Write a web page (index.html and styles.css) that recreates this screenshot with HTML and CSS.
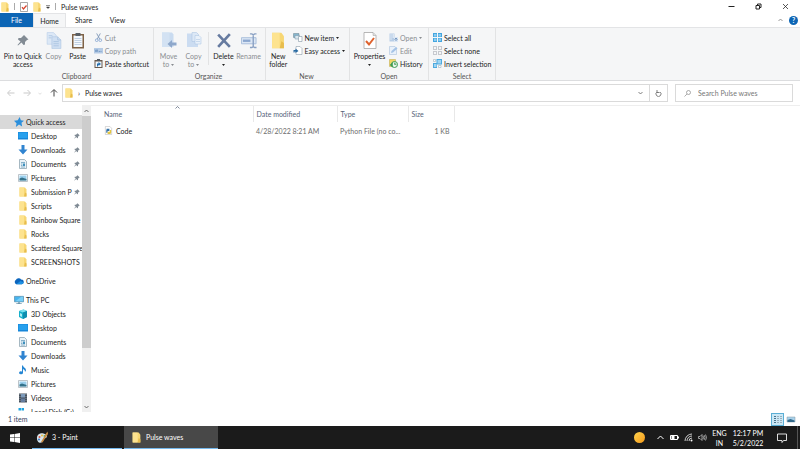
FILE: index.html
```html
<!DOCTYPE html>
<html lang="en">
<head>
    <meta charset="UTF-8">
    <meta name="viewport" content="width=device-width, initial-scale=1.0">
    <title>Pulse waves</title>
    <link rel="stylesheet" href="styles.css">
</head>
<body>
    <!-- icon shapes -->
    <svg class="sprite" width="0" height="0" aria-hidden="true">
        <symbol id="folder" viewBox="0 0 16 20">
            <path d="M1 1h11l3 4v14H1z" fill="#f7d774"/>
            <path d="M1 1h9v18H1z" fill="#fde38f"/>
            <path d="M12 11l3 2v6h-5z" fill="#e8bd4d"/>
        </symbol>
        <symbol id="pin" viewBox="0 0 24 24">
            <path d="M14 1l9 9-3 1-4 4v5l-3 1-4-5-7 6-1-1 6-7-5-4 1-3h5l4-4z" fill="currentColor"/>
        </symbol>
        <symbol id="star" viewBox="0 0 16 16">
            <path d="M9 0l2 5 5 1-4 3 1 6-5-3-5 4 1-6-4-4 6-1z" fill="#2b8fdc"/>
        </symbol>
        <symbol id="copy" viewBox="0 0 28 32">
            <path d="M1 1h12l5 5v17H1z" fill="#dce8f6" stroke="#b4cbe6"/>
            <path d="M10 9h11l6 6v16H10z" fill="#cfdff2" stroke="#a7c1e0"/>
            <path d="M21 9v6h6M4 7h7M4 11h5M13 18h10M13 22h10M13 26h10" fill="none" stroke="#a7c1e0" stroke-width="1.5"/>
        </symbol>
        <symbol id="paste" viewBox="0 0 26 34">
            <path d="M1 4h24v29H1z" fill="#7e6247"/>
            <path d="M4 7h18v23H4z" fill="#f5f9fd"/>
            <path d="M8 2h10v6H8z" fill="#596067"/>
            <path d="M6 13h14M6 17h14M6 21h14M6 25h14" stroke="#adc2d9" stroke-width="1.5"/>
        </symbol>
        <symbol id="cut" viewBox="0 0 16 20">
            <path d="M4 1l7 13M12 1L5 14" stroke="#7f97b8" stroke-width="2"/>
            <circle cx="4" cy="16" r="3" fill="none" stroke="#8eadd5" stroke-width="2"/>
            <circle cx="12" cy="16" r="3" fill="none" stroke="#8eadd5" stroke-width="2"/>
        </symbol>
        <symbol id="path" viewBox="0 0 18 16">
            <path d="M0 3h18v11H0z" fill="#b5cbe5"/>
            <path d="M2 6l2 5 2-5 2 5M10 10h2M13 10h2" fill="none" stroke="#6a90bd" stroke-width="1.5"/>
        </symbol>
        <symbol id="shortcut" viewBox="0 0 16 18">
            <path d="M0 2h16v16H0z" fill="#68594d"/>
            <path d="M2 5h12v11H2z" fill="#f1f7fd"/>
            <path d="M5 0h6v4H5z" fill="#525960"/>
            <path d="M5 15V9h3V6l5 4-5 4v-2H7v3z" fill="#256fae"/>
        </symbol>
        <symbol id="moveto" viewBox="0 0 30 34">
            <path d="M1 1h20l3 4v25H1z" fill="#c9dbf0"/>
            <path d="M1 1h15v29H1z" fill="#d3e2f3"/>
            <path d="M12 24l9-8v5h9v6h-9v5z" fill="#8ea8cb"/>
        </symbol>
        <symbol id="copyto" viewBox="0 0 30 34">
            <path d="M1 3h22v27H1z" fill="#cbdcf1"/>
            <path d="M11 1h9l4 4v14H11z" fill="#dce8f6" stroke="#a7c1e0"/>
            <path d="M17 7h8l4 4v13H17z" fill="#e9f1fa" stroke="#a7c1e0"/>
            <path d="M19 15h8M19 19h8" stroke="#a7c1e0"/>
        </symbol>
        <symbol id="delete" viewBox="0 0 28 32">
            <path d="M3 5l22 23M25 4L3 28" stroke="#667ba0" stroke-width="5"/>
        </symbol>
        <symbol id="rename" viewBox="0 0 34 32">
            <path d="M1 10h31v13H1z" fill="#dce7f5" stroke="#a9bedb" stroke-width="2"/>
            <path d="M4 14h16v5H4z" fill="#8ba7cf"/>
            <path d="M19 2h4l3 2 3-2h4M26 4v25M19 31h4l3-2 3 2h4" fill="none" stroke="#8ba2c4" stroke-width="3"/>
        </symbol>
        <symbol id="newitem" viewBox="0 0 20 18">
            <path d="M1 1h11v8H1z" fill="#86b6cd" stroke="#69818f"/>
            <path d="M4 5h9v7H4z" fill="#d9e7ef" stroke="#7492a6"/>
            <path d="M11 7h7v10h-7z" fill="#fff" stroke="#6f8595"/>
        </symbol>
        <symbol id="access" viewBox="0 0 20 18">
            <path d="M6 1h8l4 4v12H6z" fill="#fff" stroke="#788a9a"/>
            <path d="M1 13V8h4V5l6 5-6 4v-3H3v2z" fill="#286aa2"/>
        </symbol>
        <symbol id="props" viewBox="0 0 26 34">
            <path d="M1 1h18l6 6v26H1z" fill="#fff" stroke="#a0a0a0" stroke-width="1.5"/>
            <path d="M19 1v6h6" fill="#ddd" stroke="#a0a0a0"/>
            <path d="M5 18l6 7L21 12" fill="none" stroke="#df622d" stroke-width="4"/>
        </symbol>
        <symbol id="open" viewBox="0 0 18 18">
            <path d="M1 1h10v16H1z" fill="#b8cee7"/>
            <path d="M3 4h2M3 8h2M3 12h2M7 4h3M7 8h3" stroke="#fff" stroke-width="2"/>
            <path d="M10 8h8v10h-8z" fill="#dce7f4"/>
            <path d="M14 16v-6M11 13l3-3 3 3" fill="none" stroke="#7899c1" stroke-width="2"/>
        </symbol>
        <symbol id="edit" viewBox="0 0 18 18">
            <path d="M1 1h11l3 3v13H1z" fill="#e9f1fa" stroke="#9eb9d9"/>
            <path d="M4 14l1-4 9-8 3 3-9 8z" fill="#a5c3e6"/>
        </symbol>
        <symbol id="history" viewBox="0 0 18 18">
            <path d="M1 1h12v14H1z" fill="#f0d567" stroke="#bda741"/>
            <circle cx="11" cy="11" r="6" fill="#e9f5ec" stroke="#3e9b54" stroke-width="2"/>
            <path d="M11 7v4h4M2 12l5-5v9z" fill="#3e9b54" stroke="#3e9b54"/>
        </symbol>
        <symbol id="selall" viewBox="0 0 18 18">
            <path d="M0 0h8v8H0zM10 0h8v8h-8zM0 10h8v8H0zM10 10h8v8h-8z" fill="#43a5df"/>
            <path d="M2 2h5v5H2zM11 2h5v5h-5zM2 11h5v5H2zM11 11h5v5h-5z" fill="#8dcdf1"/>
        </symbol>
        <symbol id="selnone" viewBox="0 0 18 18">
            <path d="M1 1h6v6H1zM11 1h6v6h-6zM1 11h6v6H1zM11 11h6v6h-6z" fill="none" stroke="#989da4" stroke-width="2" stroke-dasharray="2 2"/>
        </symbol>
        <symbol id="selinv" viewBox="0 0 18 18">
            <path d="M7 0h11v11H7zM0 8h8v10H0z" fill="#4da9de"/>
            <path d="M9 2h7v7H9zM2 10h5v6H2z" fill="#a0d5f3"/>
            <path d="M1 1h4v4H1zM11 13h5v4h-5z" fill="#fff" stroke="#8da3b3"/>
        </symbol>
        <symbol id="check" viewBox="0 0 16 20">
            <path d="M1 1h14v18H1z" fill="#fff" stroke="#8c8c8c" stroke-width="1.5"/>
            <path d="M4 10l3 4 6-7" fill="none" stroke="#d8442d" stroke-width="2.5"/>
        </symbol>
        <symbol id="desktop" viewBox="0 0 20 16">
            <path d="M0 0h20v15H0z" fill="#1686d9"/>
            <path d="M1 1h18v11H1z" fill="#27a0ed"/>
        </symbol>
        <symbol id="down" viewBox="0 0 20 20">
            <path d="M7 0h6v9h6l-9 10L1 9h6z" fill="#3084d0"/>
        </symbol>
        <symbol id="docs" viewBox="0 0 20 20">
            <path d="M3 1h10l4 4v14H3z" fill="#eaf3f8" stroke="#8ca2af" stroke-width="1.5"/>
            <path d="M6 7h8M6 10h3M6 13h3M6 16h8" stroke="#649bbb" stroke-width="1.5"/>
            <path d="M10 9h4v5h-4z" fill="#3e90bd"/>
        </symbol>
        <symbol id="pics" viewBox="0 0 20 16">
            <path d="M1 1h18v14H1z" fill="#fff" stroke="#a5b0b8" stroke-width="1.5"/>
            <path d="M3 3h14v10H3z" fill="#9bd0ee"/>
            <path d="M3 9l5-2 9 3v3H3z" fill="#34728a"/>
        </symbol>
        <symbol id="cloud" viewBox="0 0 22 16">
            <path d="M5 15a5 5 0 0 1-1-9 7 7 0 0 1 12-1 5 5 0 0 1 1 10z" fill="#0c65bd"/>
            <path d="M5 15l9-7 7 3c0 3-2 4-4 4z" fill="#1d91e3"/>
        </symbol>
        <symbol id="pc" viewBox="0 0 22 18">
            <path d="M1 1h20v12H1z" fill="#47b4ee" stroke="#5587a5" stroke-width="1.5"/>
            <path d="M3 12L16 2h4v10z" fill="#78cff8"/>
            <path d="M9 14h4v2h4v2H5v-2h4z" fill="#6b95ac"/>
        </symbol>
        <symbol id="cube" viewBox="0 0 20 20">
            <path d="M2 4l9-3 7 3v12l-8 4-8-4z" fill="#17b0cb"/>
            <path d="M2 4l8 3 8-3-7-3z" fill="#79e2ef"/>
            <path d="M10 7l8-3v12l-8 4z" fill="#0d8eaf"/>
            <path d="M4 8l4 2v6l-4-2z" fill="#a9edf3"/>
        </symbol>
        <symbol id="music" viewBox="0 0 20 20">
            <path d="M8 1h2c1 5 6 4 6 10l-2 3c0-4-2-5-4-6v8a4 3 0 1 1-2-3z" fill="#2586d3"/>
        </symbol>
        <symbol id="video" viewBox="0 0 20 20">
            <path d="M2 1h16v18H2z" fill="#46505c"/>
            <path d="M6 2h8v7H6z" fill="#7d9bbc"/>
            <path d="M6 11h8v7H6z" fill="#647c9e"/>
            <path d="M4 2v17M16 2v17" stroke="#d6dce2" stroke-dasharray="2 2"/>
        </symbol>
        <symbol id="disk" viewBox="0 0 20 20">
            <path d="M1 2h5v5H1zM7 2h5v5H7z" fill="#1fa3df"/>
            <path d="M1 10h18v6H1z" fill="#9eabb4"/>
        </symbol>
        <symbol id="python" viewBox="0 0 16 20">
            <path d="M1 1h10l4 4v14H1z" fill="#fff" stroke="#a8a8a8"/>
            <path d="M4 6h6v5H6v4H3v-5z" fill="#3774a9"/>
            <path d="M11 9h3v6l-2 3H6v-5h5z" fill="#e4c641"/>
        </symbol>
        <symbol id="up" viewBox="0 0 10 6">
            <path d="M1 5l4-4 4 4" fill="none" stroke="currentColor" stroke-width="1.5"/>
        </symbol>
        <symbol id="dn" viewBox="0 0 10 6">
            <path d="M1 1l4 4 4-4" fill="none" stroke="currentColor" stroke-width="1.5"/>
        </symbol>
        <symbol id="tri" viewBox="0 0 8 5">
            <path d="M0 0h8L4 5z" fill="currentColor"/>
        </symbol>
        <symbol id="arrow" viewBox="0 0 16 16">
            <path d="M15 8H2M7 2L1 8l6 6" fill="none" stroke="currentColor" stroke-width="2"/>
        </symbol>
    </svg>

    <header class="titlebar">
        <svg class="i-folder"><use href="#folder"/></svg>
        <span class="bar"></span>
        <svg class="i-folder"><use href="#check"/></svg>
        <svg class="i-folder"><use href="#folder"/></svg>
        <svg class="i-tri" viewBox="0 0 8 8"><path d="M0 1h8M1 4h6L4 7z" fill="#333" stroke="#333"/></svg>
        <span class="bar"></span>
        <h1>Pulse waves</h1>
        <div class="window-buttons">
            <button aria-label="Minimize"><svg viewBox="0 0 14 14"><path d="M1 7h12" stroke="#222" stroke-width="2"/></svg></button>
            <button aria-label="Restore"><svg viewBox="0 0 14 14"><path d="M2 5h7v7H2zM5 5V2h7v7H9" fill="none" stroke="#222" stroke-width="2"/></svg></button>
            <button aria-label="Close"><svg viewBox="0 0 14 14"><path d="M2 2l10 10M12 2L2 12" stroke="#222" stroke-width="1.5"/></svg></button>
        </div>
    </header>

    <nav class="tabs">
        <button class="file">File</button>
        <button class="home">Home</button>
        <button>Share</button>
        <button>View</button>
        <div class="help">
            <button aria-label="Collapse ribbon"><svg class="i-chev"><use href="#up"/></svg></button>
            <button class="help-button" aria-label="Help">?</button>
        </div>
    </nav>

    <section class="ribbon">
        <div class="group clipboard">
            <div class="tools">
                <button class="big wide"><svg class="pin-big"><use href="#pin"/></svg><span>Pin to Quick<br>access</span></button>
                <button class="big off"><svg><use href="#copy"/></svg><span>Copy</span></button>
                <button class="big"><svg><use href="#paste"/></svg><span>Paste</span></button>
                <div class="small-list">
                    <button class="off"><svg><use href="#cut"/></svg>Cut</button>
                    <button class="off"><svg><use href="#path"/></svg>Copy path</button>
                    <button><svg><use href="#shortcut"/></svg>Paste shortcut</button>
                </div>
            </div>
            <p>Clipboard</p>
        </div>
        <div class="group organize">
            <div class="tools">
                <button class="big off"><svg><use href="#moveto"/></svg><span>Move<br>to <svg class="i-tri"><use href="#tri"/></svg></span></button>
                <button class="big off"><svg><use href="#copyto"/></svg><span>Copy<br>to <svg class="i-tri"><use href="#tri"/></svg></span></button>
                <span class="divider"></span>
                <button class="big"><svg><use href="#delete"/></svg><span>Delete<br><svg class="i-tri"><use href="#tri"/></svg></span></button>
                <button class="big off"><svg><use href="#rename"/></svg><span>Rename</span></button>
            </div>
            <p>Organize</p>
        </div>
        <div class="group new">
            <div class="tools">
                <button class="big"><svg><use href="#folder"/></svg><span>New<br>folder</span></button>
                <div class="small-list">
                    <button><svg><use href="#newitem"/></svg>New item <svg class="i-tri"><use href="#tri"/></svg></button>
                    <button><svg><use href="#access"/></svg>Easy access <svg class="i-tri"><use href="#tri"/></svg></button>
                </div>
            </div>
            <p>New</p>
        </div>
        <div class="group open">
            <div class="tools">
                <button class="big"><svg><use href="#props"/></svg><span>Properties<br><svg class="i-tri"><use href="#tri"/></svg></span></button>
                <div class="small-list">
                    <button class="off"><svg><use href="#open"/></svg>Open <svg class="i-tri"><use href="#tri"/></svg></button>
                    <button class="off"><svg><use href="#edit"/></svg>Edit</button>
                    <button><svg><use href="#history"/></svg>History</button>
                </div>
            </div>
            <p>Open</p>
        </div>
        <div class="group select">
            <div class="tools">
                <div class="small-list">
                    <button><svg><use href="#selall"/></svg>Select all</button>
                    <button><svg><use href="#selnone"/></svg>Select none</button>
                    <button><svg><use href="#selinv"/></svg>Invert selection</button>
                </div>
            </div>
            <p>Select</p>
        </div>
    </section>

    <div class="address-row">
        <div class="arrows">
            <button class="dim" aria-label="Back"><svg><use href="#arrow"/></svg></button>
            <button class="dim" aria-label="Forward"><svg class="forward"><use href="#arrow"/></svg></button>
            <button class="dim recent" aria-label="Recent"><svg><use href="#dn"/></svg></button>
            <button aria-label="Up"><svg class="upward"><use href="#arrow"/></svg></button>
        </div>
        <div class="address">
            <svg class="i-folder"><use href="#folder"/></svg>
            <span class="crumb">›</span>
            <input type="text" aria-label="Address" value="Pulse waves">
            <button aria-label="Previous locations"><svg class="i-chev"><use href="#dn"/></svg></button>
            <button class="refresh" aria-label="Refresh"><svg viewBox="0 0 14 14"><path d="M10 4a5 5 0 1 1-6 0M4 0v5h5" fill="none" stroke="#555" stroke-width="1.5"/></svg></button>
        </div>
        <div class="search">
            <svg viewBox="0 0 14 14"><circle cx="9" cy="5" r="4" fill="none" stroke="#777" stroke-width="1.2"/><path d="M6 8l-5 5" stroke="#777" stroke-width="1.2"/></svg>
            <input type="text" aria-label="Search" placeholder="Search Pulse waves">
        </div>
    </div>

    <main>
        <aside>
            <nav class="tree">
                <a href="#" class="root active"><svg><use href="#star"/></svg><span>Quick access</span></a>
                <a href="#"><svg><use href="#desktop"/></svg><span>Desktop</span><svg class="pinned"><use href="#pin"/></svg></a>
                <a href="#"><svg><use href="#down"/></svg><span>Downloads</span><svg class="pinned"><use href="#pin"/></svg></a>
                <a href="#"><svg><use href="#docs"/></svg><span>Documents</span><svg class="pinned"><use href="#pin"/></svg></a>
                <a href="#"><svg><use href="#pics"/></svg><span>Pictures</span><svg class="pinned"><use href="#pin"/></svg></a>
                <a href="#"><svg><use href="#folder"/></svg><span>Submission P</span><svg class="pinned"><use href="#pin"/></svg></a>
                <a href="#"><svg><use href="#folder"/></svg><span>Scripts</span><svg class="pinned"><use href="#pin"/></svg></a>
                <a href="#"><svg><use href="#folder"/></svg><span>Rainbow Square</span></a>
                <a href="#"><svg><use href="#folder"/></svg><span>Rocks</span></a>
                <a href="#"><svg><use href="#folder"/></svg><span>Scattered Square</span></a>
                <a href="#"><svg><use href="#folder"/></svg><span>SCREENSHOTS</span></a>
                <a href="#" class="root gap"><svg><use href="#cloud"/></svg><span>OneDrive</span></a>
                <a href="#" class="root gap"><svg><use href="#pc"/></svg><span>This PC</span></a>
                <a href="#"><svg><use href="#cube"/></svg><span>3D Objects</span></a>
                <a href="#"><svg><use href="#desktop"/></svg><span>Desktop</span></a>
                <a href="#"><svg><use href="#docs"/></svg><span>Documents</span></a>
                <a href="#"><svg><use href="#down"/></svg><span>Downloads</span></a>
                <a href="#"><svg><use href="#music"/></svg><span>Music</span></a>
                <a href="#"><svg><use href="#pics"/></svg><span>Pictures</span></a>
                <a href="#"><svg><use href="#video"/></svg><span>Videos</span></a>
                <a href="#"><svg><use href="#disk"/></svg><span>Local Disk (C:)</span></a>
            </nav>
            <div class="scrollbar">
                <button aria-label="Scroll up"><svg><use href="#up"/></svg></button>
                <div class="thumb"></div>
                <div class="track"></div>
                <button aria-label="Scroll down"><svg><use href="#dn"/></svg></button>
            </div>
        </aside>
        <div class="files">
            <table>
                <thead>
                    <tr>
                        <th class="name">Name<svg class="sort"><use href="#up"/></svg></th>
                        <th class="date">Date modified</th>
                        <th class="type">Type</th>
                        <th class="size">Size</th>
                    </tr>
                </thead>
                <tbody>
                    <tr>
                        <td class="name"><a href="#"><svg><use href="#python"/></svg>Code</a></td>
                        <td>4/28/2022 8:21 AM</td>
                        <td>Python File (no co...</td>
                        <td class="number">1 KB</td>
                    </tr>
                </tbody>
            </table>
        </div>
    </main>

    <div class="statusbar">
        <span>1 item</span>
        <div class="views">
            <button class="on" aria-label="Details"><svg viewBox="0 0 20 18"><path d="M2 3h4M2 7h4M2 11h4M2 15h4" stroke="#48738e" stroke-width="2"/><path d="M8 3h4M14 3h4M8 7h4M14 7h4M8 11h4M14 11h4M8 15h4M14 15h4" stroke="#879ba8" stroke-width="1.5"/></svg></button>
            <button aria-label="Large icons"><svg viewBox="0 0 20 18"><path d="M2 4h16v10H2z" fill="#a9d2eb" stroke="#8296a3"/><path d="M3 10l6-2 8 3v3H3z" fill="#32698a"/></svg></button>
        </div>
    </div>

    <footer class="taskbar">
        <button class="start" aria-label="Start"><svg viewBox="0 0 20 20"><path d="M0 3l8-1v7H0zM9 2l11-2v9H9zM0 10h8v8l-8-1zM9 10h11v10L9 18z" fill="#fff"/></svg></button>
        <button class="task"><svg viewBox="0 0 26 26"><path d="M2 15C1 8 8 3 15 5c6 1 8 5 6 8-2 2-5 1-6 4-1 5-5 8-9 6-2-1-4-4-4-8z" fill="#d8e6ed"/><circle cx="7" cy="12" r="2" fill="#dc5343"/><circle cx="12" cy="9" r="2" fill="#f1bb36"/><circle cx="17" cy="10" r="2" fill="#4dab58"/><circle cx="6" cy="17" r="2" fill="#377fc9"/><path d="M10 22L20 5l3-4 1 5-11 17z" fill="#c98b42"/></svg>3 - Paint</button>
        <button class="task current"><svg><use href="#folder"/></svg>Pulse waves</button>
        <div class="tray">
            <button class="weather" aria-label="Weather"><span class="sun"></span></button>
            <button aria-label="Show hidden icons"><svg viewBox="0 0 18 18"><path d="M3 12l6-6 6 6" fill="none" stroke="#fff" stroke-width="2"/></svg></button>
            <button aria-label="Battery"><svg viewBox="0 0 18 18"><path d="M1 5h14v8H1zM17 7v4" fill="none" stroke="#fff" stroke-width="2"/><path d="M3 6h6v6H3z" fill="#fff"/></svg></button>
            <button aria-label="Network"><svg viewBox="0 0 18 18"><path d="M2 16A14 14 0 0 1 16 2M6 16A10 10 0 0 1 16 6M10 16a6 6 0 0 1 6-6" fill="none" stroke="#ccc" stroke-width="2"/><circle cx="15" cy="15" r="2" fill="#fff"/></svg></button>
            <button aria-label="Volume"><svg viewBox="0 0 18 18"><path d="M1 7h3l4-4v12l-4-4H1zM10 6q2 3 0 6M12 4q4 5 0 10M15 3q4 6 0 12" fill="none" stroke="#ddd" stroke-width="1.3"/></svg></button>
            <button class="lang">ENG<br>IN</button>
            <button class="clock">12:17 PM<br>5/2/2022</button>
            <button class="notify" aria-label="Notifications"><svg viewBox="0 0 20 20"><path d="M1 2h18v13h-6l-3 4v-4H1z" fill="none" stroke="#fff" stroke-width="1.7"/></svg></button>
        </div>
    </footer>
</body>
</html>
```

FILE: styles.css
```css
* {
    box-sizing: border-box;
}
body {
    margin: 0;
    height: 100vh;
    display: flex;
    flex-direction: column;
    overflow: hidden;
    background: #fff;
    color: #222;
    font-family: Lato, "Open Sans", sans-serif;
    font-size: 7px;
    line-height: 8px;
}
button, input {
    font: inherit;
    color: inherit;
    background: none;
    border: none;
    padding: 0;
    margin: 0;
    min-width: 0;
}
button {
    display: flex;
    align-items: center;
    justify-content: center;
    white-space: nowrap;
}
a {
    color: inherit;
    text-decoration: none;
}
svg {
    flex: none;
}
.sprite {
    position: absolute;
}
.i-folder {
    width: 8px;
    height: 10px;
}
.i-tri {
    width: 3px;
    height: 2px;
    vertical-align: middle;
}
.i-chev {
    width: 5px;
    height: 4px;
}

/* title bar and tabs */
.titlebar {
    height: 13px;
    flex: none;
    display: flex;
    align-items: center;
    padding: 0 1px;
    gap: 5px;
}
.titlebar .bar {
    width: 1px;
    height: 7px;
    background: #aaa;
}
.titlebar .i-tri {
    width: 4px;
    height: 4px;
}
.titlebar h1 {
    margin: 0;
    font-size: 7px;
    font-weight: normal;
}
.window-buttons {
    display: flex;
    margin-left: auto;
}
.window-buttons button {
    width: 27px;
    height: 13px;
}
.window-buttons svg {
    width: 7px;
    height: 7px;
}
.tabs {
    height: 14px;
    flex: none;
    display: flex;
}
.tabs > button {
    width: 33px;
}
.tabs .file {
    background: #0c65b5;
    color: #fff;
}
.tabs .home {
    background: #f5f6f7;
    border: 1px solid #e3e4e6;
    border-bottom: none;
}
.tabs > button:nth-child(3) {
    width: 35px;
}
.help {
    display: flex;
    align-items: center;
    gap: 6px;
    margin-left: auto;
    padding-right: 2px;
    color: #777;
}
.help-button {
    width: 9px;
    height: 9px;
    border-radius: 50%;
    background: #0c65b5;
    color: #fff;
    font-weight: bold;
}

/* ribbon */
.ribbon {
    height: 54px;
    flex: none;
    display: flex;
    background: #f5f6f7;
    border-top: 1px solid #e3e4e6;
    border-bottom: 1px solid #dcdddf;
}
.group {
    display: flex;
    flex-direction: column;
    border-right: 1px solid #e2e3e4;
    padding: 3px 4px 0;
}
.group p {
    margin: 0;
    text-align: center;
    color: #555;
}
.tools {
    display: flex;
    height: 41px;
}
.clipboard {
    width: 154px;
}
.organize {
    width: 112px;
    padding-left: 2px;
}
.new {
    width: 84px;
    padding-left: 2px;
}
.open {
    width: 79px;
}
.select {
    width: 67px;
}
.big {
    width: 25px;
    flex-direction: column;
    justify-content: flex-start;
    padding-top: 1px;
    gap: 3px;
}
.big > svg {
    width: 16px;
    height: 17px;
}
.big > .pin-big {
    width: 12px;
    color: #828b94;
}
.wide {
    width: 39px;
}
.new .big {
    width: 27px;
}
.open .big {
    width: 31px;
}
.off {
    color: #8a8d91;
}
.divider {
    width: 1px;
    height: 33px;
    margin: 1px 2px;
    background: #e2e3e4;
}
.small-list {
    display: flex;
    flex-direction: column;
}
.big + .small-list {
    margin-left: 4px;
}
.small-list button {
    height: 13px;
    justify-content: flex-start;
    gap: 2px;
}
.small-list button > svg:first-child {
    width: 9px;
    height: 9px;
}
.new .small-list button > svg:first-child {
    width: 10px;
}

/* address row */
.address-row {
    height: 24px;
    flex: none;
    display: flex;
    align-items: center;
    padding-right: 7px;
}
.arrows {
    width: 62px;
    display: flex;
    justify-content: space-between;
    padding: 0 4px 0 7px;
}
.arrows svg {
    width: 8px;
    height: 8px;
    color: #444;
}
.arrows .dim svg {
    color: #c9c9c9;
}
.arrows .forward {
    transform: rotate(180deg);
}
.arrows .upward {
    transform: rotate(90deg);
}
.arrows .recent svg {
    width: 4px;
    height: 3px;
}
.address {
    flex: 1;
    height: 18px;
    display: flex;
    align-items: center;
    border: 1px solid #dadada;
    padding-left: 2px;
}
.address .crumb {
    width: 12px;
    text-align: center;
}
.address input {
    flex: 1;
}
.address > button {
    width: 17px;
    height: 16px;
    color: #555;
}
.address .refresh {
    width: 18px;
    border-left: 1px solid #dadada;
}
.refresh svg {
    width: 7px;
    height: 7px;
}
.search {
    width: 118px;
    height: 18px;
    margin-left: 7px;
    display: flex;
    align-items: center;
    gap: 7px;
    border: 1px solid #dadada;
    padding-left: 8px;
}
.search svg {
    width: 7px;
    height: 7px;
}
.search input {
    flex: 1;
}
.search input::placeholder {
    color: #777;
    opacity: 1;
}

/* navigation tree */
main {
    flex: 1;
    min-height: 0;
    display: flex;
}
aside {
    width: 91px;
    display: flex;
}
.tree {
    flex: 1;
    min-width: 0;
    overflow: hidden;
    padding-top: 10px;
}
.tree a {
    height: 14px;
    display: flex;
    align-items: center;
    gap: 3px;
    padding-left: 18px;
}
.tree a > svg {
    width: 10px;
    height: 10px;
}
.tree a > span {
    flex: 1;
    min-width: 0;
    white-space: nowrap;
}
.tree a > .pinned {
    width: 6px;
    height: 6px;
    margin: 0 2px 0 -3px;
    color: #7f8a94;
}
.tree .root {
    padding-left: 14px;
    gap: 2px;
}
.tree .active {
    background: #d9d9d9;
}
.tree .gap {
    margin-top: 5px;
}
.scrollbar {
    width: 9px;
    display: flex;
    flex-direction: column;
    background: #f0f0f0;
}
.scrollbar button {
    height: 11px;
    color: #444;
}
.scrollbar svg {
    width: 5px;
    height: 4px;
}
.scrollbar .thumb {
    flex: 232;
    background: #cdcdcd;
}
.scrollbar .track {
    flex: 53;
}

/* file list */
.files {
    flex: 1;
    padding-left: 9px;
    border-top: 1px solid #eee;
}
.files table {
    width: 355px;
    table-layout: fixed;
    border-collapse: collapse;
}
.files th {
    position: relative;
    height: 16px;
    padding: 0 3px;
    border-right: 1px solid #e8e8e8;
    text-align: left;
    font-weight: normal;
    color: #566379;
}
.files .name {
    width: 153px;
    padding-left: 4px;
}
.files .date {
    width: 84px;
}
.files .type {
    width: 71px;
}
.sort {
    position: absolute;
    left: 49%;
    top: 0;
    width: 5px;
    height: 3px;
}
.files td {
    height: 17px;
    padding: 0 3px;
    color: #6d6d6d;
    white-space: nowrap;
}
.files td a {
    display: flex;
    align-items: center;
    gap: 3px;
    color: #222;
}
.files td svg {
    width: 9px;
    height: 9px;
}
.files .number {
    text-align: right;
    padding-right: 5px;
}

/* status bar */
.statusbar {
    height: 14px;
    flex: none;
    display: flex;
    align-items: center;
    justify-content: space-between;
    padding: 0 3px 0 8px;
    color: #35455e;
}
.views {
    display: flex;
}
.views button {
    width: 13px;
    height: 13px;
}
.views svg {
    width: 10px;
    height: 9px;
}
.views .on {
    background: #cbe8f6;
    border: 1px solid #5aaed5;
}

/* taskbar */
.taskbar {
    height: 23px;
    flex: none;
    display: flex;
    background: #1b1b1b;
    color: #fff;
}
.start {
    width: 30px;
}
.start svg {
    width: 10px;
    height: 10px;
}
.task {
    width: 90px;
    justify-content: flex-start;
    gap: 3px;
    margin-left: 2px;
    padding-left: 4px;
    border-bottom: 1px solid #76b9ed;
}
.task svg {
    width: 13px;
    height: 13px;
}
.task.current {
    width: 94px;
    padding-left: 6px;
    background: #484848;
}
.task.current svg {
    height: 11px;
}
.tray {
    display: flex;
    margin-left: auto;
    padding-right: 2px;
}
.tray button {
    width: 14px;
}
.tray svg {
    width: 9px;
    height: 9px;
}
.tray .weather {
    width: 28px;
}
.sun {
    width: 11px;
    height: 11px;
    border-radius: 50%;
    background: linear-gradient(135deg, #ffd34d, #f59a1b);
}
.tray .lang {
    width: 21px;
    line-height: 10px;
}
.tray .clock {
    width: 36px;
    line-height: 10px;
}
.tray .notify {
    width: 32px;
    border-right: 1px solid #555;
}
.tray .notify svg {
    width: 10px;
    height: 10px;
}
```
